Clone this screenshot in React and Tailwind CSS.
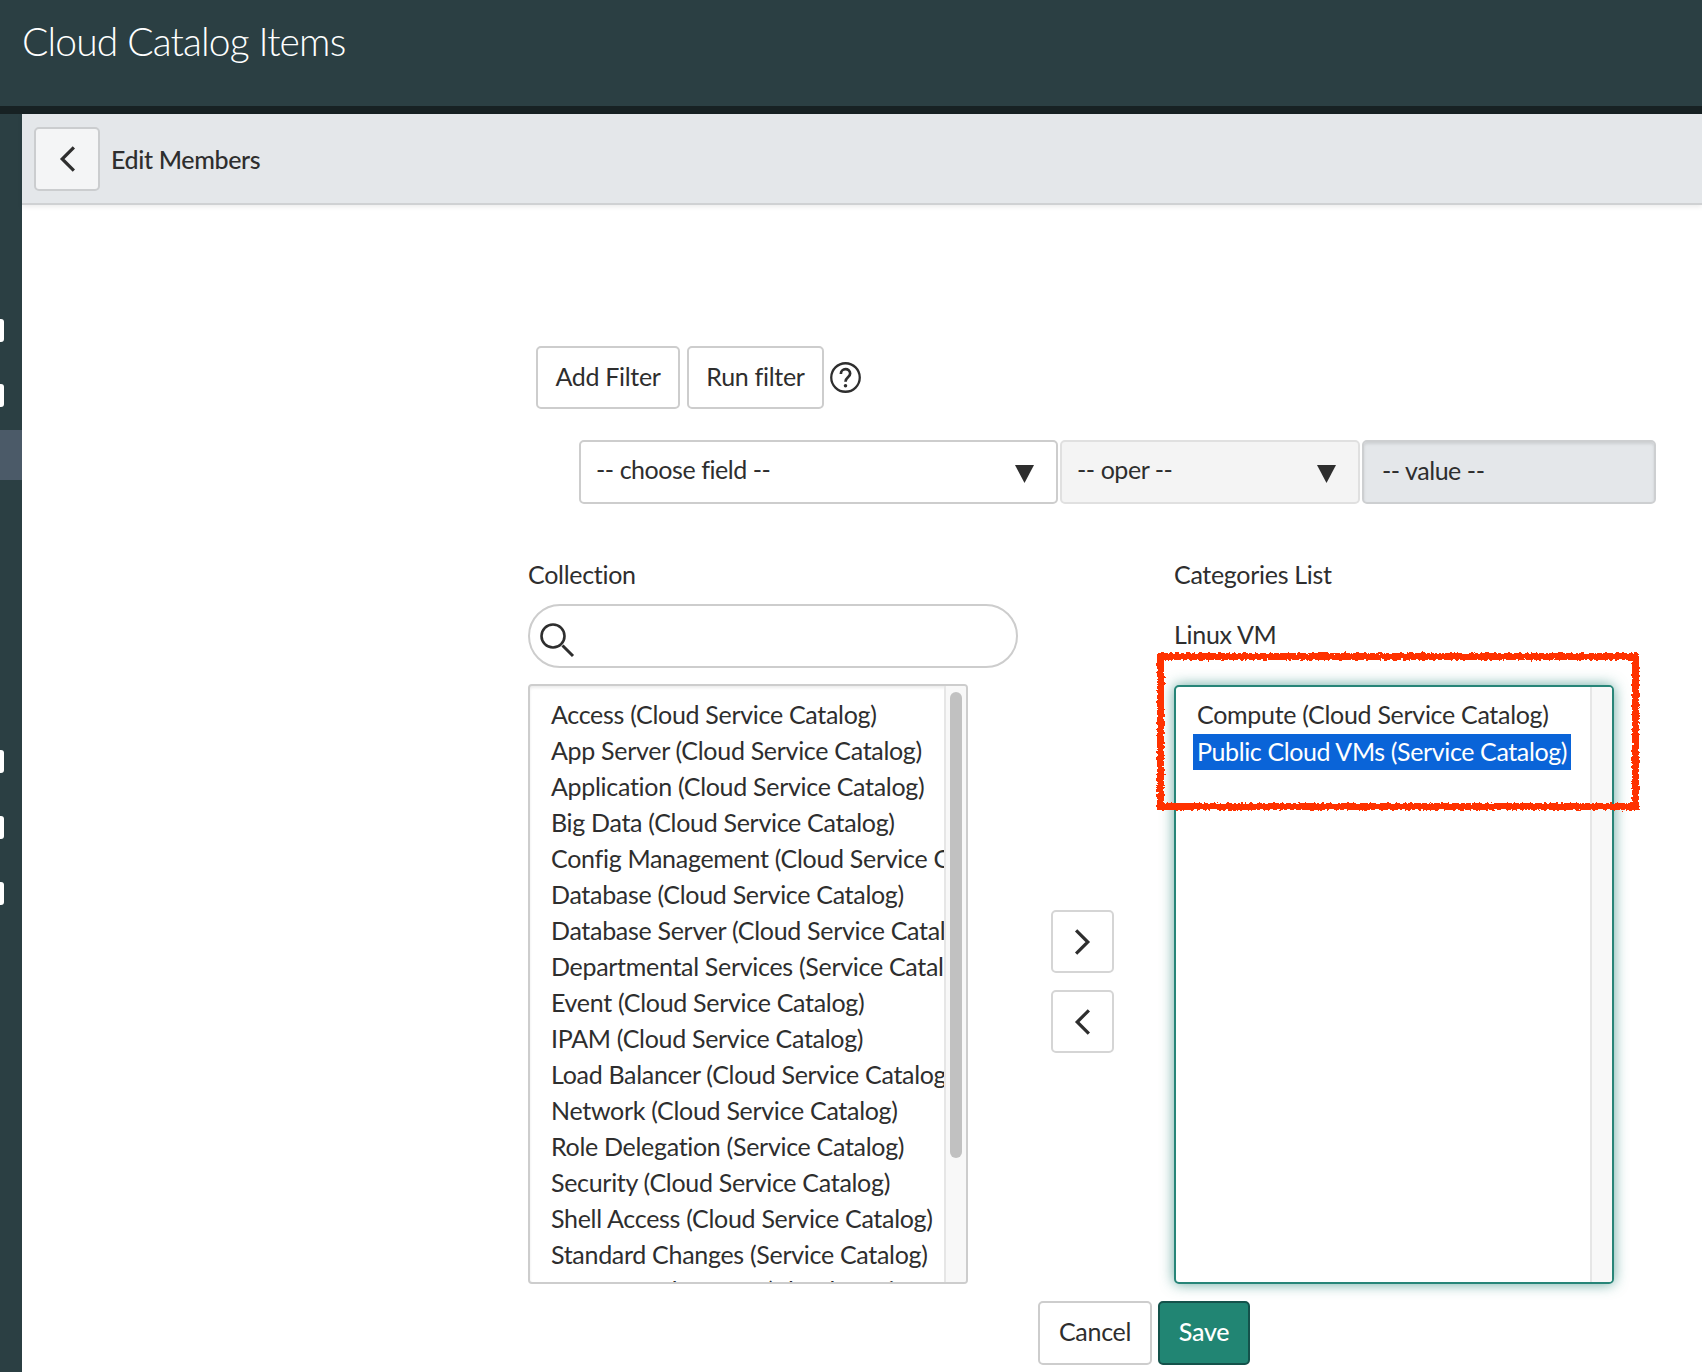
const items = [
  "Access (Cloud Service Catalog)",
  "App Server (Cloud Service Catalog)",
  "Application (Cloud Service Catalog)",
  "Big Data (Cloud Service Catalog)",
  "Config Management (Cloud Service Catalog)",
  "Database (Cloud Service Catalog)",
  "Database Server (Cloud Service Catalog)",
  "Departmental Services (Service Catalog)",
  "Event (Cloud Service Catalog)",
  "IPAM (Cloud Service Catalog)",
  "Load Balancer (Cloud Service Catalog)",
  "Network (Cloud Service Catalog)",
  "Role Delegation (Service Catalog)",
  "Security (Cloud Service Catalog)",
  "Shell Access (Cloud Service Catalog)",
  "Standard Changes (Service Catalog)",
  "Tomcat Web Server (Cloud Service Catalog)",
];

function Chevron({ dir, className }) {
  return (
    <svg viewBox="0 0 16 25" className={className} fill="none" stroke="#2e2e2e" strokeWidth="3">
      <path d={dir === "left" ? "M14 1.5 L3 12.5 L14 23.5" : "M2 1.5 L13 12.5 L2 23.5"} />
    </svg>
  );
}

function Caret() {
  return (
    <svg viewBox="0 0 18 17" className="w-[19px] h-[18px] mt-[3px]" fill="#2e2e2e">
      <polygon points="0,0 18,0 9,17" />
    </svg>
  );
}

function SideHandle({ className }) {
  return <div className={"h-[23px] w-1 rounded-r-[3px] bg-white " + className} />;
}

function Scrollbar({ thumb }) {
  return (
    <div className="w-[22px] shrink-0 border-l-2 border-[#e6e6e6] bg-[#f8f8f8] pt-[6px] pl-[4px]">
      {thumb && <div className="h-[466px] w-[12px] rounded-full bg-[#c1c1c1]" />}
    </div>
  );
}

export default function App() {
  return (
    <div className="w-[1702px] h-[1372px] overflow-hidden bg-white text-[#2e2e2e] text-[25px] leading-[36px] tracking-[-0.3px] font-['Lato','Liberation_Sans',sans-serif] flex flex-col relative">
      <header className="h-[114px] shrink-0 bg-[#2b3f43] border-b-[8px] border-[#172123] pl-[22px] pt-[16px]">
        <h1 className="text-[39px] leading-[50px] font-light text-white tracking-[-0.85px]">Cloud Catalog Items</h1>
      </header>

      <div className="flex flex-1 min-h-0">
        <aside className="w-[22px] shrink-0 bg-[#2b3f43] flex flex-col">
          <SideHandle className="mt-[205px]" />
          <SideHandle className="mt-[42px]" />
          <div className="mt-[23px] h-[50px] bg-[#4b5a68]" />
          <SideHandle className="mt-[270px]" />
          <SideHandle className="mt-[43px]" />
          <SideHandle className="mt-[43px]" />
        </aside>

        <main className="flex-1 min-w-0 flex flex-col">
          <div className="h-[91px] shrink-0 bg-[#e4e7ea] border-b-2 border-[#cfd1d3] shadow-[0_2px_5px_rgba(0,0,0,0.08)] flex items-center pl-[12px] gap-[11px]">
            <button className="w-[66px] h-[64px] rounded-[5px] border-2 border-[#cbcdcf] bg-[#f4f5f6] flex items-center justify-center">
              <Chevron dir="left" className="w-[17px] h-[28px]" />
            </button>
            <span className="text-[25px] font-medium tracking-[-0.35px]">Edit Members</span>
          </div>

          <div className="pl-[506px] flex flex-col">
            <div className="mt-[141px] ml-[8px] flex items-center">
              <button className="w-[144px] h-[63px] rounded-[5px] border-2 border-[#cdcdcd] bg-white pb-[4px]">Add Filter</button>
              <button className="ml-[7px] w-[137px] h-[63px] rounded-[5px] border-2 border-[#cdcdcd] bg-white pb-[4px]">Run filter</button>
              <svg viewBox="0 0 30 30" className="ml-[6px] w-[31px] h-[31px]" fill="none" stroke="#2e2e2e" strokeWidth="2.2">
                <circle cx="15" cy="15" r="13.8" />
                <path d="M10.5 11.5 C10.5 5.5 19.5 5.5 19.5 11.2 C19.5 14.8 15 14.8 15 19" strokeWidth="2.6" />
                <circle cx="15" cy="23" r="1.7" fill="#2e2e2e" stroke="none" />
              </svg>
            </div>

            <div className="mt-[31px] ml-[51px] flex gap-[2px] h-[64px]">
              <div className="w-[479px] rounded-[5px] border-2 border-[#cdcdcd] bg-white flex items-center justify-between pl-[15px] pr-[22px]">
                <span className="pb-[6px] tracking-[-0.45px]">-- choose field --</span>
                <Caret />
              </div>
              <div className="w-[300px] rounded-[5px] border-2 border-[#e0e0e0] bg-[#f4f4f4] flex items-center justify-between pl-[15px] pr-[22px]">
                <span className="pb-[6px] tracking-[-0.45px]">-- oper --</span>
                <Caret />
              </div>
              <div className="w-[294px] rounded-[5px] border-2 border-[#cdcfd1] bg-[#e4e7ea] shadow-[inset_0_2px_3px_rgba(0,0,0,0.1)] flex items-center pl-[18px]">
                <span className="pb-[4px] tracking-[-0.45px]">-- value --</span>
              </div>
            </div>

            <div className="mt-[52px] flex">
              <div className="w-[440px] shrink-0">
                <div>Collection</div>
                <div className="mt-[12px] h-[64px] w-[490px] rounded-full border-2 border-[#cdcdcd] bg-white flex items-center pl-[10px]">
                  <svg viewBox="0 0 36 36" className="w-[36px] h-[36px] mt-[10px]" fill="none" stroke="#2e2e2e" strokeWidth="2.6">
                    <circle cx="13" cy="13" r="11.5" />
                    <path d="M22.5 22.5 L33 33" strokeWidth="3" />
                  </svg>
                </div>
                <div className="mt-[16px] h-[600px] rounded-[4px] border-2 border-[#cdcdcd] bg-white shadow-[inset_0_2px_3px_rgba(0,0,0,0.08)] flex overflow-hidden">
                  <div className="flex-1 min-w-0 overflow-hidden pt-[10px] pl-[17px]">
                    {items.map((t) => (
                      <div key={t} className="pl-[4px] whitespace-nowrap">{t}</div>
                    ))}
                  </div>
                  <Scrollbar thumb />
                </div>
              </div>

              <div className="w-[206px] shrink-0 pl-[83px] flex flex-col pt-[354px] gap-[17px]">
                <button className="w-[63px] h-[63px] rounded-[5px] border-2 border-[#d5d5d5] bg-white flex items-center justify-center">
                  <Chevron dir="right" className="w-[17px] h-[28px]" />
                </button>
                <button className="w-[63px] h-[63px] rounded-[5px] border-2 border-[#d5d5d5] bg-white flex items-center justify-center">
                  <Chevron dir="left" className="w-[17px] h-[28px]" />
                </button>
              </div>

              <div className="w-[440px] shrink-0">
                <div>Categories List</div>
                <div className="mt-[24px]">Linux VM</div>
                <div className="mt-[33px] h-[599px] rounded-[5px] border-2 border-[#278578] bg-white shadow-[0_0_14px_rgba(39,133,120,0.7)] flex overflow-hidden">
                  <div className="flex-1 min-w-0 overflow-hidden pt-[9px] pl-[17px]">
                    <div className="pl-[4px] whitespace-nowrap">Compute (Cloud Service Catalog)</div>
                    <div className="mt-[2px] w-[378px] h-[36px] leading-[34px] pl-[4px] whitespace-nowrap bg-[#0a64d8] text-white tracking-[-0.38px]">Public Cloud VMs (Service Catalog)</div>
                  </div>
                  <Scrollbar />
                </div>
              </div>
            </div>

            <div className="mt-[17px] ml-[510px] flex gap-[6px]">
              <button className="w-[114px] h-[64px] rounded-[5px] border-2 border-[#cdcdcd] bg-white pb-[4px]">Cancel</button>
              <button className="w-[92px] h-[64px] rounded-[5px] border-2 border-[#14524b] bg-[#218573] text-white font-medium pb-[4px]">Save</button>
            </div>
          </div>
        </main>
      </div>

      <svg className="absolute left-[1150px] top-[646px] w-[496px] h-[172px] pointer-events-none" viewBox="0 0 496 172" fill="none">
        <defs>
          <filter id="rough" x="-5%" y="-10%" width="110%" height="120%">
            <feTurbulence type="fractalNoise" baseFrequency="0.35" numOctaves="2" seed="4" />
            <feDisplacementMap in="SourceGraphic" scale="5" />
          </filter>
        </defs>
        <rect x="10.5" y="10.5" width="475" height="150" stroke="#ff3300" strokeWidth="7" filter="url(#rough)" />
      </svg>
    </div>
  );
}
